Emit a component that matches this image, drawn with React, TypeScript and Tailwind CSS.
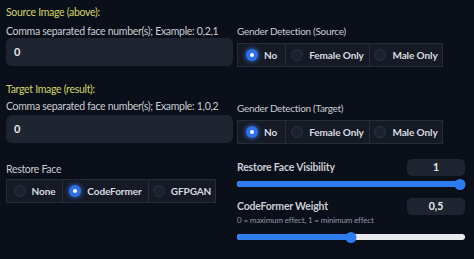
import React from "react";

const font = { fontFamily: "Lato, 'Noto Sans', sans-serif" };

function Radio({ selected }: { selected: boolean }) {
  return selected ? (
    <span className="w-[12px] h-[12px] rounded-full bg-[#2f6fe8] flex items-center justify-center shadow-[0_0_4px_1px_rgba(59,130,246,0.6)] shrink-0">
      <span className="w-[4px] h-[4px] rounded-full bg-white" />
    </span>
  ) : (
    <span className="w-[12px] h-[12px] rounded-full bg-[#1c2230] border border-[#2b3240] shrink-0" />
  );
}

function RadioGroup({ items, sel, widths }: { items: string[]; sel: number; widths: number[] }) {
  return (
    <div className="flex h-[24px]">
      {items.map((it, i) => (
        <div
          key={it}
          style={{ width: widths[i] }}
          className="flex items-center justify-center gap-[6px] bg-[#151a25] border border-[#262c38] text-[10px] tracking-[-0.1px] font-bold text-[#d8dbe0] whitespace-nowrap -ml-px first:ml-0"
        >
          <Radio selected={i === sel} />
          <span>{it}</span>
        </div>
      ))}
    </div>
  );
}

function Label({ children, cls = "" }: { children: React.ReactNode; cls?: string }) {
  return (
    <div className={`text-[10.5px] tracking-[-0.3px] leading-[14px] h-[14px] whitespace-nowrap text-[#c9ccd2] ${cls}`}>
      {children}
    </div>
  );
}

function Title({ children, cls = "" }: { children: React.ReactNode; cls?: string }) {
  return (
    <div className={`text-[10.5px] tracking-[-0.3px] leading-[16px] h-[16px] whitespace-nowrap text-[#d2d46c] ${cls}`}>
      {children}
    </div>
  );
}

function Input({ value, cls = "" }: { value: string; cls?: string }) {
  return (
    <div className={`h-[28px] rounded-[6px] bg-[#1e2430] flex items-center pl-[8px] text-[11px] font-bold text-[#e5e7eb] ${cls}`}>
      {value}
    </div>
  );
}

function NumBox({ value }: { value: string }) {
  return (
    <div className="w-[58px] h-[17px] rounded-[5px] bg-[#1f2530] flex items-center justify-center text-[10.5px] font-bold text-[#e5e7eb]">
      {value}
    </div>
  );
}

function Slider({ pct }: { pct: number }) {
  return (
    <div className="relative h-[10px] w-[228px] flex items-center">
      <div className="h-[6px] w-full rounded-full bg-[#e8eaee] overflow-hidden">
        <div className="h-full bg-[#2f7cf0]" style={{ width: `${pct}%` }} />
      </div>
      <div
        className="absolute w-[11px] h-[11px] rounded-full bg-[#2f7cf0] -translate-x-1/2"
        style={{ left: `${pct}%` }}
      />
    </div>
  );
}

export default function App() {
  return (
    <div className="w-[474px] h-[259px] bg-[#0b0f19] overflow-hidden" style={font}>
      <div className="flex pl-[6px] gap-[4px]">
        <div className="w-[227px] flex flex-col">
          <Title cls="mt-[4px]">Source Image (above):</Title>
          <Label cls="mt-[4px]">Comma separated face number(s); Example: 0,2,1</Label>
          <Input value="0" cls="mt-[0px]" />
          <Title cls="mt-[15px]">Target Image (result):</Title>
          <Label cls="mt-[2px]">Comma separated face number(s); Example: 1,0,2</Label>
          <Input value="0" cls="mt-[2px]" />
          <Label cls="mt-[19px]">Restore Face</Label>
          <div className="mt-[3px]">
            <RadioGroup items={["None", "CodeFormer", "GFPGAN"]} sel={1} widths={[57, 87, 68]} />
          </div>
        </div>
        <div className="w-[231px] flex flex-col">
          <Label cls="mt-[24px] text-[10px]">Gender Detection (Source)</Label>
          <div className="mt-[5px]">
            <RadioGroup items={["No", "Female Only", "Male Only"]} sel={0} widths={[49, 85, 74]} />
          </div>
          <Label cls="mt-[34px] text-[10px]">Gender Detection (Target)</Label>
          <div className="mt-[5px]">
            <RadioGroup items={["No", "Female Only", "Male Only"]} sel={0} widths={[49, 85, 74]} />
          </div>
          <div className="mt-[15px] flex items-center justify-between pr-[3px] h-[17px]">
            <span className="text-[10.5px] tracking-[-0.2px] font-bold text-[#c9ccd2]">Restore Face Visibility</span>
            <NumBox value="1" />
          </div>
          <div className="mt-[3px]">
            <Slider pct={98} />
          </div>
          <div className="mt-[9px] flex items-center justify-between pr-[3px] h-[17px]">
            <span className="text-[10.5px] tracking-[-0.2px] font-bold text-[#c9ccd2]">CodeFormer Weight</span>
            <NumBox value="0,5" />
          </div>
          <div className="text-[8px] tracking-[-0.15px] leading-[12px] whitespace-nowrap text-[#9097a3] mt-[-1px]">
            0 = maximum effect, 1 = minimum effect
          </div>
          <div className="mt-[6px]">
            <Slider pct={50} />
          </div>
        </div>
      </div>
    </div>
  );
}
